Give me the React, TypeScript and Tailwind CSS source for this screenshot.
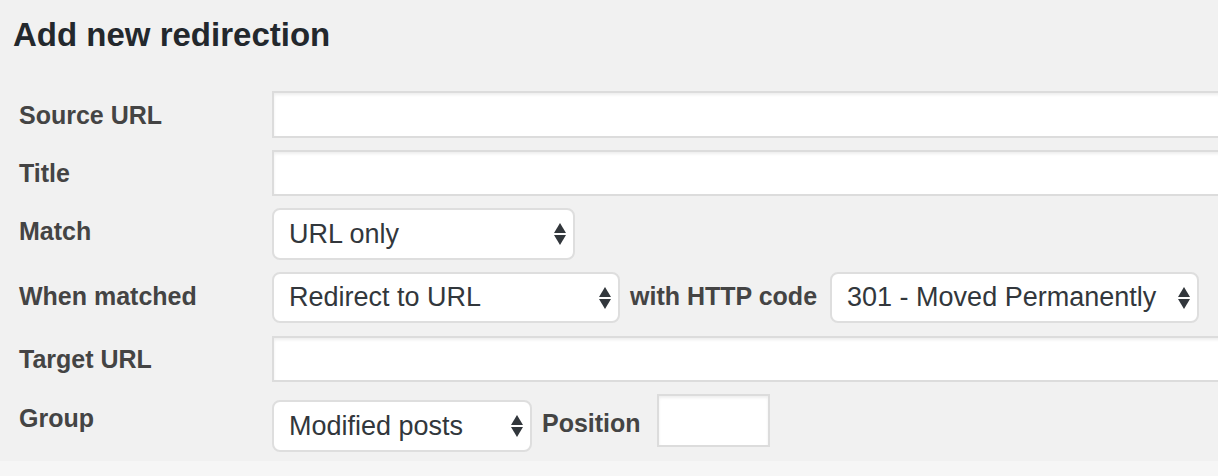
import React from 'react'

const font = { fontFamily: '"Liberation Sans", Arial, sans-serif' }

const Arrows = () => (
  <svg width="12" height="24" viewBox="0 0 12 24" className="pointer-events-none absolute right-[9px] top-1/2 -translate-y-1/2">
    <path d="M6 1 L12 11 L0 11 Z" fill="#32373c" />
    <path d="M0 13 L12 13 L6 23 Z" fill="#32373c" />
  </svg>
)

interface SelectProps {
  value: string
  options: string[]
  className: string
}

const Select: React.FC<SelectProps> = ({ value, options, className }) => (
  <div className={`relative ${className}`}>
    <select
      defaultValue={value}
      style={font}
      className="h-full w-full appearance-none rounded-[8px] border-2 border-[#dedede] bg-white pl-[15px] pr-8 text-[27px] text-[#32373c] outline-none"
    >
      {options.map(o => (
        <option key={o}>{o}</option>
      ))}
    </select>
    <Arrows />
  </div>
)

const TextInput = ({ className }: { className: string }) => (
  <input
    type="text"
    className={`border-2 border-[#dcdcdc] bg-white shadow-[inset_0_2px_3px_rgba(0,0,0,0.07)] outline-none ${className}`}
  />
)

const Label = ({ children, className = '' }: { children: React.ReactNode; className?: string }) => (
  <div className={`w-[272px] shrink-0 pl-[19px] text-[25px] font-bold leading-[30px] text-[#444] ${className}`}>{children}</div>
)

export default function App() {
  return (
    <div style={font} className="h-[476px] w-[1218px] overflow-hidden bg-[#f1f1f1]">
      <div className="h-[461px]">
        {/* Header */}
        <h1 className="pl-[13px] pt-[15px] text-[33px] font-bold leading-[40px] text-[#23282d]">Add new redirection</h1>

        <div className="mt-[36px] flex flex-col gap-[12px]">
          {/* Source URL */}
          <div className="flex h-[47px] items-center">
            <Label>Source URL</Label>
            <TextInput className="h-[47px] w-[960px] shrink-0" />
          </div>

          {/* Title */}
          <div className="flex h-[46px] items-center">
            <Label>Title</Label>
            <TextInput className="h-[46px] w-[960px] shrink-0" />
          </div>

          {/* Match */}
          <div className="flex h-[52px] items-center">
            <Label className="-mt-[6px]">Match</Label>
            <Select value="URL only" options={['URL only', 'URL and referrer', 'URL and login status']} className="h-[52px] w-[303px]" />
          </div>

          {/* When matched */}
          <div className="flex h-[51px] items-center">
            <Label className="-mt-[4px]">When matched</Label>
            <Select value="Redirect to URL" options={['Redirect to URL', 'Redirect to random post', 'Pass-through', 'Error (404)']} className="h-[51px] w-[348px] shrink-0" />
            <div className="-mt-[2px] ml-[10px] mr-[13px] text-[25px] font-bold text-[#444]">with HTTP code</div>
            <Select value="301 - Moved Permanently" options={['301 - Moved Permanently', '302 - Found', '307 - Temporary Redirect']} className="h-[51px] w-[369px] shrink-0" />
          </div>

          {/* Target URL */}
          <div className="mt-[1px] flex h-[46px] items-center">
            <Label>Target URL</Label>
            <TextInput className="h-[46px] w-[960px] shrink-0" />
          </div>

          {/* Group */}
          <div className="flex h-[58px] items-start">
            <Label className="mt-[9px]">Group</Label>
            <Select value="Modified posts" options={['Modified posts', 'Redirections']} className="mt-[6px] h-[52px] w-[260px] shrink-0" />
            <div className="ml-[10px] mt-[14px] text-[25px] font-bold leading-[30px] text-[#444]">Position</div>
            <TextInput className="ml-[16px] h-[53px] w-[113px] shrink-0" />
          </div>
        </div>
      </div>
      <div className="h-[15px] bg-[#f6f6f6]" />
    </div>
  )
}
